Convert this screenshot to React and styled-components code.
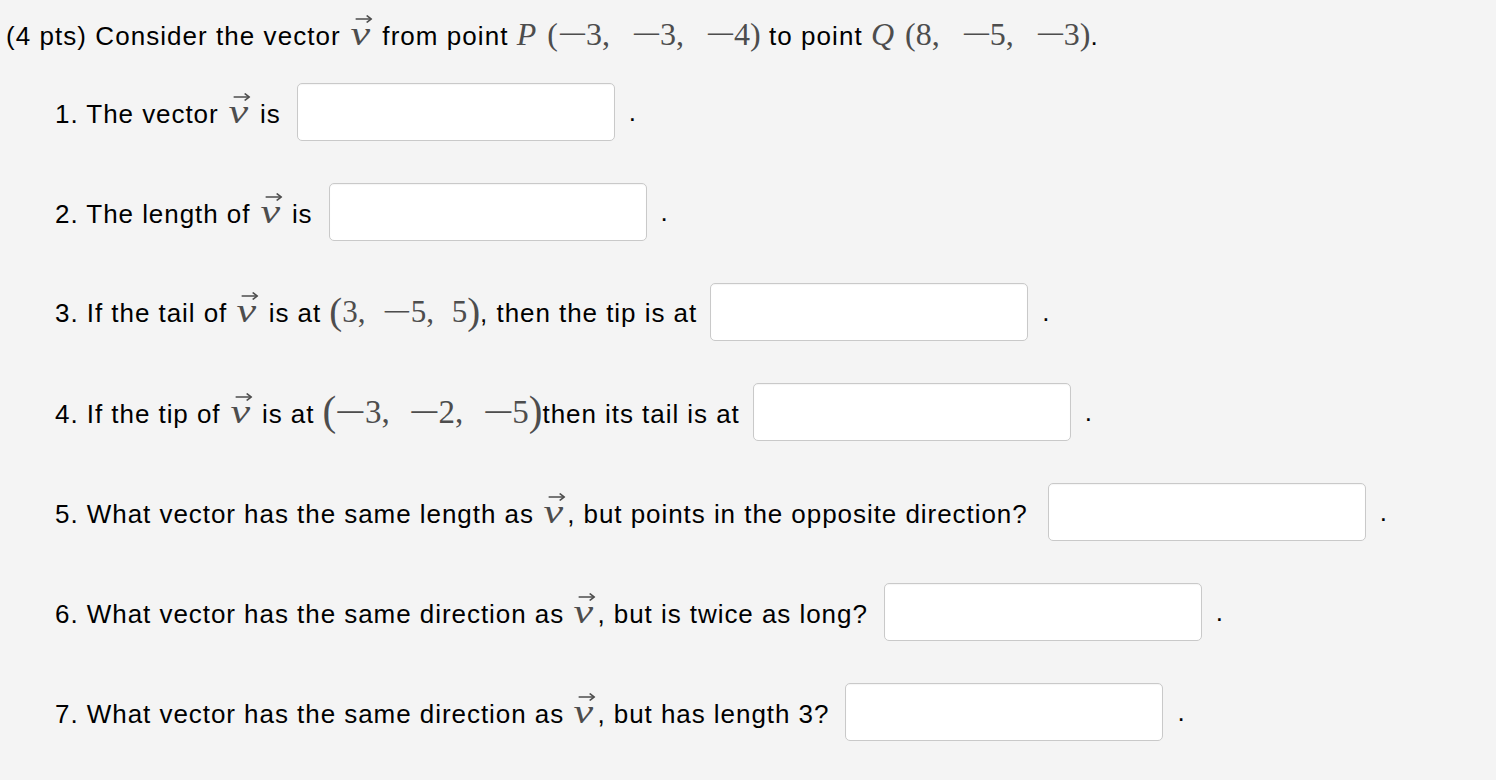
import React from "react";
import styled, { createGlobalStyle } from "styled-components";

const GlobalStyle = createGlobalStyle`
  html, body {
    margin: 0;
    background: #f4f4f4;
  }
  body {
    font-family: "Liberation Sans", Arial, sans-serif;
    color: #000;
  }
`;

const Page = styled.div`
  min-height: 780px;
  box-sizing: border-box;
  padding: 12px 0 40px 6px;
`;

const Title = styled.div`
  font-size: 26px;
  letter-spacing: 1.05px;
  line-height: 44px;
  white-space: nowrap;
`;

const List = styled.div`
  margin-top: 25px;
  padding-left: 49px;
  display: flex;
  flex-direction: column;
  gap: 42px;
`;

const Row = styled.div`
  display: flex;
  align-items: center;
  height: 58px;
  white-space: nowrap;
`;

const Label = styled.span`
  font-size: 26px;
  letter-spacing: 0.95px;
`;

const Answer = styled.input`
  width: 318px;
  height: 58px;
  box-sizing: border-box;
  margin-left: ${(p) => p.$gap || 16}px;
  border: 1px solid #c9c9c9;
  border-radius: 5px;
  background: #fff;
  box-shadow: inset 0 1px 1px rgba(0, 0, 0, 0.04);
  outline: none;
`;

const Dot = styled.span`
  font-size: 26px;
  margin-left: 14px;
`;

const Math = styled.span`
  font-family: "Liberation Serif", "Times New Roman", serif;
  font-size: ${(p) => p.$size || 30}px;
  letter-spacing: 0;
  word-spacing: ${(p) => p.$space || 10}px;
  color: #4d4d4d;
`;

const Paren = styled.span`
  display: inline-block;
  font-size: ${(p) => (p.$big ? 1.25 : 1)}em;
  line-height: 0;
  vertical-align: ${(p) => (p.$big ? "-2px" : "0")};
`;

const MinusSign = styled.span`
  display: inline-block;
  margin: 0 5px;
  transform: scaleX(1.7);
`;

const Var = styled.i`
  font-family: "Liberation Serif", "Times New Roman", serif;
  font-style: italic;
  font-size: 32px;
  letter-spacing: 0;
  color: #4d4d4d;
  padding-right: 11px;
`;

const VecWrap = styled.span`
  position: relative;
  display: inline-block;
  padding: 0 6px 0 4px;
  font-family: "Liberation Serif", "Times New Roman", serif;
  font-style: italic;
  font-size: 34px;
  letter-spacing: 0;
  color: #4d4d4d;
  line-height: 1;
  transform: scaleX(1.3);
`;

const Arrow = styled.svg`
  position: absolute;
  left: 7px;
  top: -4px;
  width: 14px;
  height: 10px;
`;

const Vec = () => (
  <VecWrap>
    v
    <Arrow viewBox="0 0 14 10">
      <path d="M1 6 H12.5" stroke="#4d4d4d" strokeWidth="1.4" fill="none" />
      <path d="M9.5 2.5 L13 6 L9.5 9.5" stroke="#4d4d4d" strokeWidth="1.4" fill="none" />
    </Arrow>
  </VecWrap>
);

// turns "−3, 5" into text with widened minus signs
const renderNums = (s) =>
  s.split("−").map((part, i) => (
    <React.Fragment key={i}>
      {i > 0 && <MinusSign>−</MinusSign>}
      {part}
    </React.Fragment>
  ));

const Point = ({ text, size, big, space }) => (
  <Math $size={size} $space={space}>
    <Paren $big={big}>(</Paren>
    {renderNums(text)}
    <Paren $big={big}>)</Paren>
  </Math>
);

const items = [
  { n: 1, label: <>The vector <Vec /> is</> },
  { n: 2, label: <>The length of <Vec /> is</> },
  { n: 3, label: <>If the tail of <Vec /> is at <Point size={31} big text="3, −5, 5" />, then the tip is at</>, gap: 13 },
  { n: 4, label: <>If the tip of <Vec /> is at <Point size={33} big space={12} text="−3, −2, −5" />then its tail is at</>, gap: 13 },
  { n: 5, label: <>What vector has the same length as <Vec />, but points in the opposite direction?</>, gap: 20 },
  { n: 6, label: <>What vector has the same direction as <Vec />, but is twice as long?</> },
  { n: 7, label: <>What vector has the same direction as <Vec />, but has length 3?</> },
];

export default function App() {
  return (
    <Page>
      <GlobalStyle />
      <Title>
        (4 pts) Consider the vector <Vec /> from point{" "}
        <Var>P</Var><Point text="−3, −3, −4" size={32} space={14} /> to point{" "}
        <Var>Q</Var><Point text="8, −5, −3" size={32} space={14} />.
      </Title>
      <List>
        {items.map((it) => (
          <Row key={it.n}>
            <Label>
              {it.n}. {it.label}
            </Label>
            <Answer type="text" $gap={it.gap} />
            <Dot>.</Dot>
          </Row>
        ))}
      </List>
    </Page>
  );
}
